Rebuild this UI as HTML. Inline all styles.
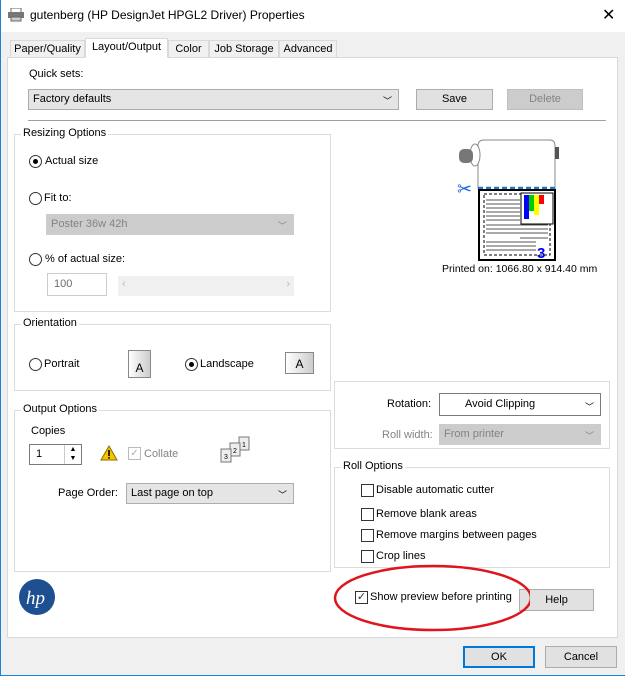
<!DOCTYPE html>
<html><head><meta charset="utf-8"><style>
*{box-sizing:border-box;margin:0;padding:0}
body{width:625px;height:676px;position:relative;background:#f0f0f0;font-family:"Liberation Sans",sans-serif;font-size:11px;color:#000;overflow:hidden}
.a{position:absolute;white-space:nowrap}
.grp{position:absolute;border:1px solid #dcdcdc}
.gl{position:absolute;background:#fff;padding:0 2px;top:-8px;left:6px}
.btn{position:absolute;background:#e1e1e1;border:1px solid #adadad;text-align:center}
.cb{position:absolute;width:13px;height:13px;border:1px solid #333;background:#fff}
.rd{position:absolute;width:13px;height:13px;border:1px solid #333;border-radius:50%;background:#fff}
.rd.on::after{content:"";position:absolute;left:3px;top:3px;width:5px;height:5px;border-radius:50%;background:#000}
.combo{position:absolute;border:1px solid #adadad;background:#e5e5e5;padding-left:4px}
.dis{background:#ccc;border-color:#ccc;color:#838383}
.chev{position:absolute;right:6px;top:2px;font-size:9px}
.tab{position:absolute;top:40px;height:18px;border:1px solid #d9d9d9;background:#f0f0f0;text-align:center;line-height:16px}
</style></head><body>
<div class="a" style="left:0;top:0;width:625px;height:32px;background:#fff"></div>
<div class="a" style="left:0;top:0;width:1px;height:676px;background:#1883d7"></div>
<div class="a" style="left:0;top:675px;width:625px;height:1px;background:#1883d7"></div>
<svg class="a" style="left:8px;top:8px" width="16" height="14"><rect x="3" y="0" width="10" height="5" fill="#fff" stroke="#666"/><rect x="0" y="4" width="16" height="6" fill="#777"/><rect x="3" y="9" width="10" height="4" fill="#ccc" stroke="#666"/></svg>
<div class="a" style="left:30px;top:8px;font-size:12px">gutenberg (HP DesignJet HPGL2 Driver) Properties</div>
<div class="a" style="left:602px;top:5px;font-size:16px">✕</div>
<div class="a" style="left:7px;top:57px;width:611px;height:581px;background:#fff;border:1px solid #d9d9d9"></div>
<div class="tab" style="left:10px;width:75px">Paper/Quality</div>
<div class="tab" style="left:85px;top:38px;height:20px;width:83px;background:#fff;border-bottom-color:#fff">Layout/Output</div>
<div class="tab" style="left:168px;width:41px">Color</div>
<div class="tab" style="left:209px;width:70px">Job Storage</div>
<div class="tab" style="left:279px;width:58px">Advanced</div>

<div class="a" style="left:29px;top:68px">Quick sets:</div>
<div class="combo" style="left:28px;top:89px;width:371px;height:21px;line-height:19px">Factory defaults<span class="chev">﹀</span></div>
<div class="btn" style="left:416px;top:89px;width:77px;height:21px;line-height:19px">Save</div>
<div class="btn" style="left:507px;top:89px;width:76px;height:21px;line-height:19px;background:#ccc;border-color:#bfbfbf;color:#838383">Delete</div>
<div class="a" style="left:28px;top:120px;width:578px;height:1px;background:#a0a0a0"></div>

<div class="grp" style="left:14px;top:134px;width:317px;height:178px"><span class="gl">Resizing Options</span></div>
<div class="rd on" style="left:29px;top:155px"></div><div class="a" style="left:45px;top:155px">Actual size</div>
<div class="rd" style="left:29px;top:192px"></div><div class="a" style="left:44px;top:192px">Fit to:</div>
<div class="combo dis" style="left:46px;top:214px;width:248px;height:21px;line-height:19px">Poster 36w 42h<span class="chev">﹀</span></div>
<div class="rd" style="left:29px;top:253px"></div><div class="a" style="left:45px;top:253px">% of actual size:</div>
<div class="a" style="left:47px;top:273px;width:60px;height:23px;border:1px solid #ccc;color:#6d6d6d;padding:4px 0 0 6px">100</div>
<div class="a" style="left:118px;top:276px;width:176px;height:20px;background:#f0f0f0;color:#bbb;padding:2px 4px">‹<span style="float:right">›</span></div>

<div class="grp" style="left:14px;top:324px;width:317px;height:67px"><span class="gl">Orientation</span></div>
<div class="rd" style="left:29px;top:358px"></div><div class="a" style="left:44px;top:358px">Portrait</div>
<div class="a" style="left:128px;top:350px;width:23px;height:28px;border:1px solid #888;background:linear-gradient(90deg,#fff,#ccc);text-align:center;padding-top:10px;font-size:12px">A</div>
<div class="rd on" style="left:185px;top:358px"></div><div class="a" style="left:200px;top:358px">Landscape</div>
<div class="a" style="left:285px;top:352px;width:29px;height:22px;border:1px solid #888;background:linear-gradient(90deg,#fff,#ccc);text-align:center;padding-top:4px;font-size:12px">A</div>

<div class="grp" style="left:14px;top:410px;width:317px;height:162px"><span class="gl">Output Options</span></div>
<div class="a" style="left:31px;top:425px">Copies</div>
<div class="a" style="left:29px;top:444px;width:53px;height:21px;border:1px solid #7a7a7a;padding:3px 6px">1</div>
<div class="a" style="left:64px;top:445px;width:17px;height:19px;border-left:1px solid #ccc;font-size:7px;text-align:center;line-height:9px">▲<br>▼</div>
<svg class="a" style="left:100px;top:445px" width="18" height="16"><path d="M9 1L17 15H1Z" fill="#f5c400" stroke="#8a6d00"/><rect x="8.2" y="5" width="1.6" height="6"/><rect x="8.2" y="12" width="1.6" height="1.6"/></svg>
<div class="cb" style="left:128px;top:447px;border-color:#bbb;color:#aaa;font-size:10px;line-height:11px;text-align:center">✓</div>
<div class="a" style="left:144px;top:448px;color:#838383">Collate</div>
<svg class="a" style="left:219px;top:436px" width="32" height="28"><g fill="#eee" stroke="#777"><rect x="20" y="1" width="10" height="13"/><rect x="11" y="7" width="10" height="13"/><rect x="2" y="13" width="10" height="13"/></g><g font-size="7" font-family="Liberation Sans"><text x="23" y="11">1</text><text x="14" y="17">2</text><text x="5" y="23">3</text></g></svg>
<div class="a" style="left:58px;top:487px">Page Order:</div>
<div class="combo" style="left:126px;top:483px;width:168px;height:21px;line-height:19px">Last page on top<span class="chev">﹀</span></div>

<svg class="a" style="left:440px;top:138px" width="125" height="125">
<path d="M38 51V8Q38 2 44 2H110Q115 2 115 8V51" fill="#fff" stroke="#888"/>
<ellipse cx="35" cy="17" rx="5" ry="11" fill="#fff" stroke="#888"/><rect x="19" y="11" width="14" height="14" rx="5" fill="#777"/>
<rect x="115" y="9" width="4" height="12" fill="#555"/>
<line x1="38" y1="50" x2="116" y2="50" stroke="#1a7cc7" stroke-width="2.5" stroke-dasharray="5 3"/>
<text x="17" y="57" fill="#1560e0" font-size="18">✂</text>
<rect x="39" y="52" width="76" height="70" fill="#fff" stroke="#000" stroke-width="2"/>
<rect x="44" y="56" width="66" height="61" fill="none" stroke="#000" stroke-dasharray="3 2"/>
<g stroke="#555"><line x1="46" y1="62" x2="80" y2="62"/><line x1="46" y1="66" x2="80" y2="66"/><line x1="46" y1="70" x2="80" y2="70"/><line x1="46" y1="74" x2="80" y2="74"/><line x1="46" y1="78" x2="80" y2="78"/><line x1="46" y1="82" x2="80" y2="82"/><line x1="46" y1="87" x2="108" y2="87"/><line x1="46" y1="91" x2="108" y2="91"/><line x1="46" y1="95" x2="108" y2="95"/><line x1="80" y1="100" x2="108" y2="100"/><line x1="46" y1="104" x2="96" y2="104"/><line x1="46" y1="108" x2="96" y2="108"/><line x1="46" y1="112" x2="96" y2="112"/></g>
<rect x="81" y="55" width="32" height="31" fill="#fff" stroke="#000"/>
<rect x="84" y="57" width="5" height="24" fill="#0000ff"/><rect x="89" y="57" width="5" height="16" fill="#00cc00"/><rect x="94" y="57" width="5" height="20" fill="#ffff00"/><rect x="99" y="57" width="5" height="9" fill="#ff0000"/>
<text x="97" y="120" fill="#0000ee" font-size="15" font-weight="bold" font-family="Liberation Sans">3</text>
</svg>
<div class="a" style="left:442px;top:263px;font-size:10.5px">Printed on: 1066.80 x 914.40 mm</div>

<div class="grp" style="left:334px;top:381px;width:276px;height:68px"></div>
<div class="a" style="left:387px;top:398px">Rotation:</div>
<div class="combo" style="left:439px;top:393px;width:162px;height:23px;line-height:21px;background:#fff;border-color:#7a7a7a;padding-left:25px">Avoid Clipping<span class="chev" style="top:3px">﹀</span></div>
<div class="a" style="left:382px;top:429px;color:#838383">Roll width:</div>
<div class="combo dis" style="left:439px;top:424px;width:162px;height:21px;line-height:19px">From printer<span class="chev">﹀</span></div>

<div class="grp" style="left:334px;top:467px;width:276px;height:101px"><span class="gl">Roll Options</span></div>
<div class="cb" style="left:361px;top:484px"></div><div class="a" style="left:376px;top:484px">Disable automatic cutter</div>
<div class="cb" style="left:361px;top:508px"></div><div class="a" style="left:376px;top:508px">Remove blank areas</div>
<div class="cb" style="left:361px;top:529px"></div><div class="a" style="left:376px;top:529px">Remove margins between pages</div>
<div class="cb" style="left:361px;top:550px"></div><div class="a" style="left:376px;top:550px">Crop lines</div>

<svg class="a" style="left:18px;top:578px" width="38" height="38"><circle cx="19" cy="19" r="18" fill="#1d4f91"/><text x="8" y="26" fill="#fff" font-size="19" font-style="italic" font-family="Liberation Serif">hp</text></svg>

<div class="cb" style="left:355px;top:591px;color:#333;font-size:11px;line-height:11px;text-align:center">✓</div>
<div class="a" style="left:370px;top:591px">Show preview before printing</div>
<div class="btn" style="left:519px;top:589px;width:75px;height:22px;line-height:20px">Help</div>
<svg class="a" style="left:330px;top:562px" width="200" height="72"><ellipse cx="103" cy="36" rx="98" ry="32" fill="none" stroke="#e0141e" stroke-width="2.5"/></svg>

<div class="btn" style="left:463px;top:646px;width:72px;height:22px;line-height:18px;border:2px solid #0078d7">OK</div>
<div class="btn" style="left:545px;top:646px;width:72px;height:22px;line-height:20px">Cancel</div>
</body></html>
